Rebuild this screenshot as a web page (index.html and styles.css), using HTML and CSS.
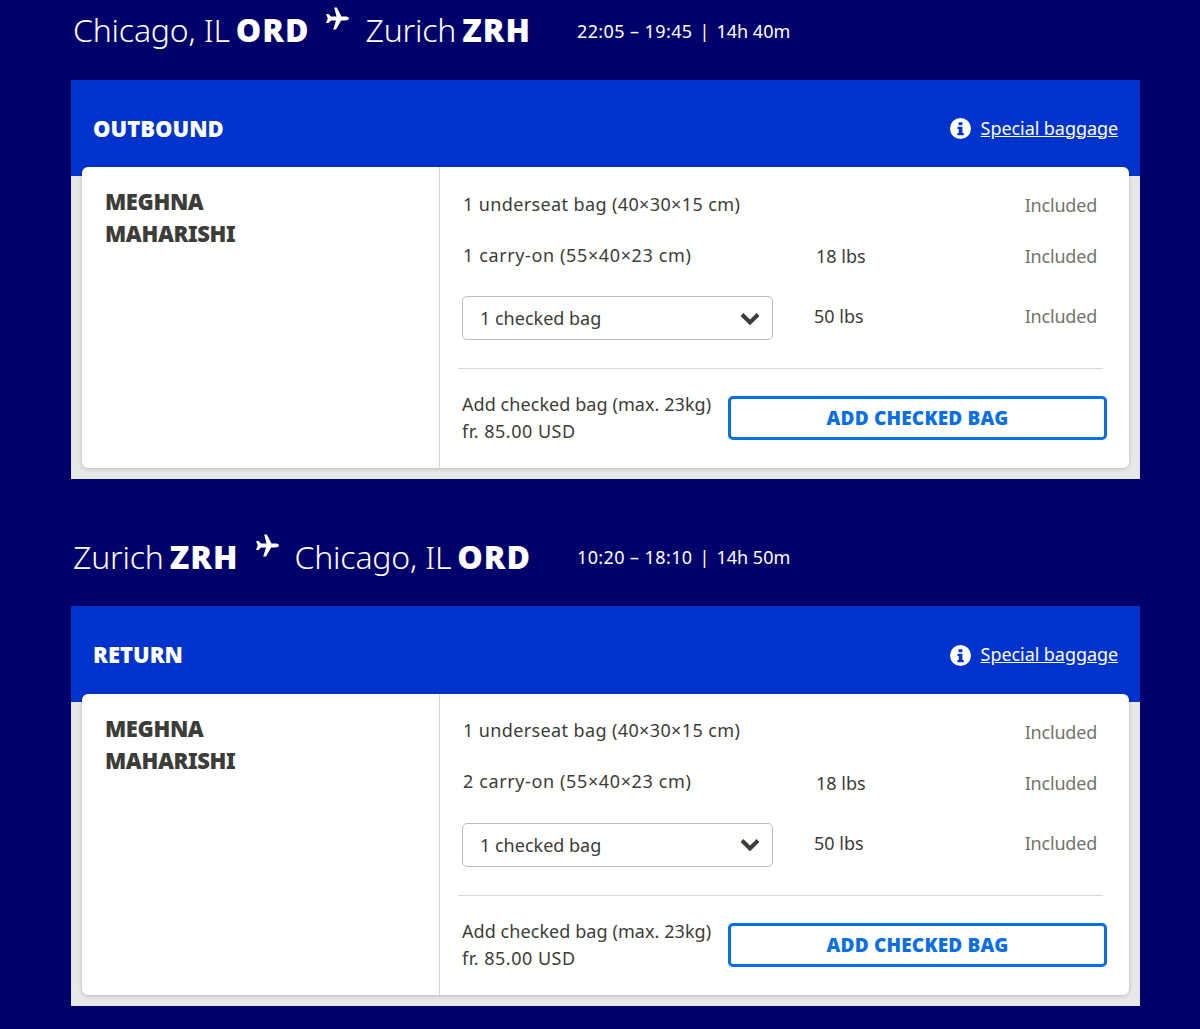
FILE: index.html
```html
<!DOCTYPE html>
<html lang="en">
<head>
  <meta charset="UTF-8">
  <meta name="viewport" content="width=device-width, initial-scale=1.0">
  <title>Baggage</title>
  <link rel="stylesheet" href="styles.css">
</head>
<body>
  <main class="page">
    <header class="route">
      <h2 class="route-title">
        <span class="city">Chicago, IL <b>ORD</b></span>
        <svg class="plane" viewBox="0 0 26 25"><path d="M25 12.2C25 11 23 10.5 21 10.5H17.5L12.8 1.5H10.2L12.5 10.5H7L4.5 8H2L3.8 12.5 2 17H4.5L7 14.5H12L9.2 23.5H12L17.2 14.5H21C23 14.5 25 13.5 25 12.2Z"/></svg>
        <span class="city">Zurich <b>ZRH</b></span>
      </h2>
      <p class="times"><span class="time">22:05 – 19:45</span><span class="pipe">|</span><span>14h 40m</span></p>
    </header>

    <section class="leg">
      <div class="leg-head">
        <h3>OUTBOUND</h3>
        <a class="special" href="#">
          <svg class="info" viewBox="0 0 22 22"><circle cx="11" cy="11" r="11"/><path class="info-i" d="M9 4.5h4v3.2H9zM7.8 9.2H13v6.6h1.4v2.4H7.8v-2.4h1.4v-4.2H7.8z"/></svg>
          <span class="special-text">Special baggage</span>
        </a>
      </div>
      <div class="card">
        <div class="passenger">MEGHNA<br>MAHARISHI</div>
        <div class="bags">
          <div class="bag-row bag-first">
            <span class="bag-name">1 underseat bag (40×30×15 cm)</span>
            <span class="bag-status">Included</span>
          </div>
          <div class="bag-row bag-second">
            <span class="bag-name">1 carry-on (55×40×23 cm)</span>
            <span class="bag-weight">18 lbs</span>
            <span class="bag-status">Included</span>
          </div>
          <div class="bag-row bag-third">
            <div class="select">
              <span>1 checked bag</span>
              <svg class="chevron" viewBox="0 0 20 13"><path d="M2 2.5l8 8 8-8"/></svg>
            </div>
            <span class="bag-weight">50 lbs</span>
            <span class="bag-status">Included</span>
          </div>
          <hr class="divider">
          <div class="add-row">
            <p class="add-text">Add checked bag (max. 23kg)<br><span class="price">fr. 85.00 USD</span></p>
            <button class="add-btn">ADD CHECKED BAG</button>
          </div>
        </div>
      </div>
    </section>

    <header class="route">
      <h2 class="route-title">
        <span class="city">Zurich <b>ZRH</b></span>
        <svg class="plane" viewBox="0 0 26 25"><path d="M25 12.2C25 11 23 10.5 21 10.5H17.5L12.8 1.5H10.2L12.5 10.5H7L4.5 8H2L3.8 12.5 2 17H4.5L7 14.5H12L9.2 23.5H12L17.2 14.5H21C23 14.5 25 13.5 25 12.2Z"/></svg>
        <span class="city">Chicago, IL <b>ORD</b></span>
      </h2>
      <p class="times"><span class="time">10:20 – 18:10</span><span class="pipe">|</span><span>14h 50m</span></p>
    </header>

    <section class="leg">
      <div class="leg-head">
        <h3>RETURN</h3>
        <a class="special" href="#">
          <svg class="info" viewBox="0 0 22 22"><circle cx="11" cy="11" r="11"/><path class="info-i" d="M9 4.5h4v3.2H9zM7.8 9.2H13v6.6h1.4v2.4H7.8v-2.4h1.4v-4.2H7.8z"/></svg>
          <span class="special-text">Special baggage</span>
        </a>
      </div>
      <div class="card">
        <div class="passenger">MEGHNA<br>MAHARISHI</div>
        <div class="bags">
          <div class="bag-row bag-first">
            <span class="bag-name">1 underseat bag (40×30×15 cm)</span>
            <span class="bag-status">Included</span>
          </div>
          <div class="bag-row bag-second">
            <span class="bag-name">2 carry-on (55×40×23 cm)</span>
            <span class="bag-weight">18 lbs</span>
            <span class="bag-status">Included</span>
          </div>
          <div class="bag-row bag-third">
            <div class="select">
              <span>1 checked bag</span>
              <svg class="chevron" viewBox="0 0 20 13"><path d="M2 2.5l8 8 8-8"/></svg>
            </div>
            <span class="bag-weight">50 lbs</span>
            <span class="bag-status">Included</span>
          </div>
          <hr class="divider">
          <div class="add-row">
            <p class="add-text">Add checked bag (max. 23kg)<br><span class="price">fr. 85.00 USD</span></p>
            <button class="add-btn">ADD CHECKED BAG</button>
          </div>
        </div>
      </div>
    </section>
  </main>
</body>
</html>
```

FILE: styles.css
```css
html, body {
  margin: 0;
  padding: 0;
  background-color: #00006b;
}

body {
  font-family: "Noto Sans", sans-serif;
  color: #3c3c38;
}

.page {
  margin-top: -0.25px;
  padding: 0 60px 0 71px;
}

.route {
  display: flex;
  align-items: center;
  height: 62px;
  margin-bottom: 18px;
  color: #fff;
}

.route-title {
  display: flex;
  align-items: center;
  margin: -2px 0 0;
  font-size: 32px;
  font-weight: 300;
  letter-spacing: -0.2px;
}

.route-title b {
  margin-left: -2px;
  font-weight: 900;
  letter-spacing: 1px;
}

.city {
  margin-left: 2px;
}

.plane {
  width: 26px;
  height: 25px;
  margin: -22px 13px 0 15px;
  fill: #fff;
}

.times {
  display: flex;
  margin: 0 0 0 46px;
  font-size: 18px;
}

.time {
  letter-spacing: 0.4px;
}

.pipe {
  margin: 0 7px;
}

.leg {
  height: 399.5px;
  margin-bottom: 47px;
  background: linear-gradient(#0033cc 96px, #e8e8e8 96px);
}

.leg-head {
  display: flex;
  justify-content: space-between;
  align-items: center;
  box-sizing: border-box;
  height: 87.5px;
  padding: 8px 22px 0;
  color: #fff;
}

.leg-head h3 {
  margin: 0;
  font-size: 22px;
  font-weight: 900;
}

.special {
  display: flex;
  align-items: center;
  color: #fff;
  font-size: 18px;
}

.special-text {
  letter-spacing: -0.07px;
}

.info {
  width: 21px;
  height: 21px;
  margin: 2px 10px 0 0;
  fill: #fff;
}

.info-i {
  fill: #0033cc;
}

.card {
  display: flex;
  height: 301px;
  margin: 0 11px;
  background-color: #fff;
  border-radius: 6px;
  box-shadow: 0 1px 4px rgba(0, 0, 0, 0.2);
}

.passenger {
  width: 358px;
  box-sizing: border-box;
  padding: 18px 23px;
  border-right: 1px solid #d8d8d4;
  font-size: 22px;
  font-weight: 900;
  line-height: 32px;
  letter-spacing: -0.4px;
}

.bags {
  flex: 1;
  padding: 0 22px 0 23px;
  font-size: 18px;
}

.bag-row {
  display: flex;
  align-items: center;
}

.bag-first {
  height: 72px;
}

.bag-second {
  height: 31px;
}

.bag-third {
  height: 44px;
  margin-top: 26px;
}

.bag-name {
  width: 353px;
}

.bag-first .bag-name {
  padding-top: 1px;
  letter-spacing: 0.38px;
}

.bag-second .bag-name {
  letter-spacing: 0.62px;
}

.bag-weight {
  width: 160px;
}

.bag-status {
  margin-left: auto;
  padding-right: 10px;
  color: #73736b;
  letter-spacing: -0.2px;
}

.bag-first .bag-status {
  padding-top: 4px;
}

.bag-second .bag-weight,
.bag-second .bag-status {
  padding-top: 2.5px;
}

.bag-third .bag-weight,
.bag-third .bag-status {
  padding-bottom: 4px;
}

.select {
  display: flex;
  justify-content: space-between;
  align-items: center;
  width: 311px;
  height: 44px;
  box-sizing: border-box;
  margin: 0 41px 0 -1px;
  padding: 0 12px 0 17px;
  border: 1px solid #bdbbb3;
  border-radius: 5px;
}

.chevron {
  width: 20px;
  height: 13px;
  fill: none;
  stroke: #3c3c38;
  stroke-width: 4;
}

.divider {
  height: 1px;
  margin: 28px 4px 0 -5px;
  border: 0;
  background-color: #d8d8d4;
}

.add-row {
  display: flex;
  align-items: center;
  justify-content: space-between;
  margin: 22px 0 0 -1px;
}

.add-text {
  margin: 0;
  line-height: 27px;
  letter-spacing: 0.07px;
}

.price {
  letter-spacing: 0.5px;
}

.add-btn {
  width: 379px;
  height: 44px;
  background-color: #fff;
  border: 3px solid #0a6ee6;
  border-radius: 5px;
  color: #0a6ee6;
  font-family: inherit;
  font-size: 19px;
  font-weight: 900;
  letter-spacing: 0.2px;
}
```
